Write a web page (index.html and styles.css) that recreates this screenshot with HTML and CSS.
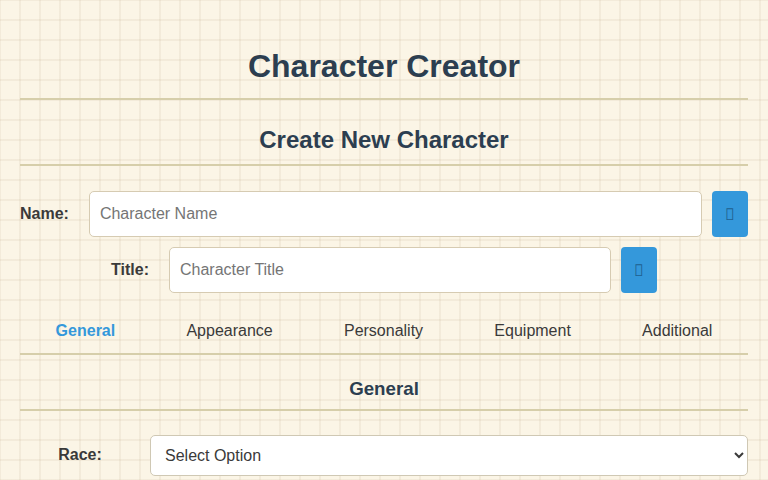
FILE: index.html
```html
<!DOCTYPE html>
<html lang="en">
<head>
    <meta charset="UTF-8">
    <title>Character Creator</title>
    <link rel="stylesheet" href="styles.css">
</head>
<body>
<div class="container">
    <h1 class="page-title">Character Creator</h1>
    <h2 class="form-title">Create New Character</h2>
    <div class="name-row">
        <label class="name-label" for="name">Name:</label>
        <input class="name-input" id="name" type="text" placeholder="Character Name">
        <button class="dice-btn" type="button"><i class="icon">&#xf522;</i></button>
    </div>
    <div class="name-row name-row-center">
        <label class="name-label" for="title">Title:</label>
        <input class="name-input title-input" id="title" type="text" placeholder="Character Title">
        <button class="dice-btn" type="button"><i class="icon">&#xf522;</i></button>
    </div>
    <div class="tabs">
        <a class="tab active" href="#">General</a>
        <a class="tab" href="#">Appearance</a>
        <a class="tab" href="#">Personality</a>
        <a class="tab" href="#">Equipment</a>
        <a class="tab" href="#">Additional</a>
    </div>
    <h3 class="section-title">General</h3>
    <div class="field">
        <label class="field-label" for="race">Race:</label>
        <select class="field-select" id="race">
            <option>Select Option</option>
        </select>
    </div>
</div>
</body>
</html>
```

FILE: styles.css
```css
* {
    box-sizing: border-box;
}
body {
    margin: 0;
    font-family: "Liberation Sans", Arial, sans-serif;
    color: #3a3a3a;
    background-color: #fbf5e6;
    background-image:
        linear-gradient(rgba(190, 175, 140, 0.14) 2px, transparent 2px),
        linear-gradient(90deg, rgba(190, 175, 140, 0.14) 2px, transparent 2px);
    background-size: 20px 20px;
    background-position: -1px -1px;
}
.container {
    padding: 20px;
}
.page-title {
    margin: 28px 0 26px 0;
    padding-bottom: 13px;
    text-align: center;
    font-size: 32px;
    line-height: 37px;
    color: #2c3e50;
    border-bottom: 2px solid #d6ceaa;
}
.form-title {
    margin: 0 0 25px 0;
    padding-bottom: 11px;
    text-align: center;
    font-size: 24px;
    line-height: 27px;
    color: #2c3e50;
    border-bottom: 2px solid #d6ceaa;
}
.name-row {
    display: flex;
    align-items: center;
    gap: 10px;
    margin-bottom: 10px;
}
.name-row-center {
    justify-content: center;
}
.name-label {
    margin-right: 10px;
    font-size: 16px;
    font-weight: bold;
}
.name-input {
    flex: 1;
    height: 46px;
    padding: 0 10px;
    font-family: inherit;
    font-size: 16px;
    background: #ffffff;
    border: 1px solid #d6cbb2;
    border-radius: 5px;
}
.title-input {
    flex: none;
    width: 442px;
}
.dice-btn {
    width: 36px;
    height: 46px;
    padding: 0;
    font-family: "Noto Sans", sans-serif;
    font-size: 16px;
    color: #1f5f8f;
    background: #3498db;
    border: none;
    border-radius: 4px;
}
.icon {
    font-style: normal;
}
.tabs {
    display: flex;
    justify-content: space-around;
    margin-top: 18px;
    border-bottom: 2px solid #d6ceaa;
}
.tab {
    padding: 11px 0 13px 0;
    font-size: 16px;
    line-height: 18px;
    color: #3a3a3a;
    text-decoration: none;
}
.tab.active {
    font-weight: bold;
    color: #3498db;
}
.section-title {
    margin: 23px 0 24px 0;
    padding-bottom: 9px;
    text-align: center;
    font-size: 18.72px;
    line-height: 22px;
    color: #2c3e50;
    border-bottom: 2px solid #d6ceaa;
}
.field {
    display: flex;
    align-items: center;
    gap: 10px;
}
.field-label {
    width: 120px;
    margin-top: -2px;
    text-align: center;
    font-size: 16px;
    font-weight: bold;
}
.field-select {
    flex: 1;
    height: 41px;
    padding: 10px;
    font-family: inherit;
    font-size: 16px;
    color: #3a3a3a;
    background: #ffffff;
    border: 1px solid #cfc8b4;
    border-radius: 5px;
}
```
